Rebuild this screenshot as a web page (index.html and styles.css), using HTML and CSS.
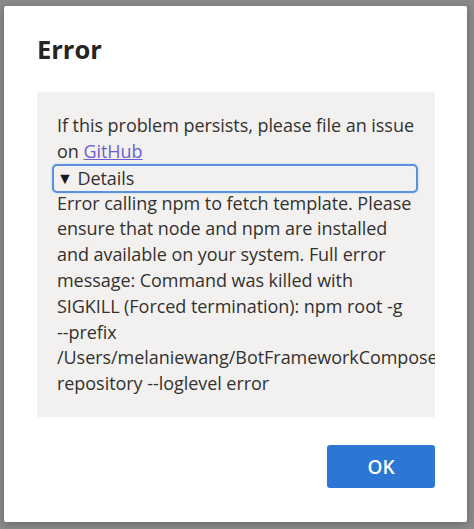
FILE: index.html
```html
<!DOCTYPE html>
<html lang="en">
<head>
<meta charset="utf-8">
<title>Error</title>
<link rel="stylesheet" href="styles.css">
</head>
<body>
<div class="overlay">
  <div class="dialog" role="dialog" aria-labelledby="dlg-title">
    <h1 class="title" id="dlg-title">Error</h1>
    <div class="message">
      <p class="lead">If this problem persists, please file an issue on <a href="#" class="link">GitHub</a></p>
      <details class="details" open>
        <summary class="summary"><span class="caret">&#9660;</span> Details</summary>
        <p class="detail-text">Error calling npm to fetch template. Please ensure that node and npm are installed and available on your system. Full error message: Command was killed with SIGKILL (Forced termination): npm root -g <span class="nowrap">--prefix</span> /Users/melaniewang/BotFrameworkComposer/.npm-repository <span class="nowrap">--loglevel</span> error</p>
      </details>
    </div>
    <div class="actions">
      <button class="ok" type="button">OK</button>
    </div>
  </div>
</div>
</body>
</html>
```
FILE: styles.css
```css
html, body {
  margin: 0;
  padding: 0;
  height: 100%;
}
body {
  background: #8a8a8a;
  font-family: "Open Sans", "Noto Sans", "Liberation Sans", sans-serif;
  color: #323130;
  overflow: hidden;
}
.overlay {
  height: 100%;
  box-sizing: border-box;
  padding: 6px 7px 7px 4px;
  display: flex;
}
.dialog {
  flex: 1;
  min-width: 0;
  background: #ffffff;
  border-radius: 2px;
  box-shadow: 0 2px 8px rgba(0,0,0,0.25);
  padding: 0 32px 0 33px;
  display: flex;
  flex-direction: column;
}
.title {
  margin: 0;
  padding: 29px 0 0 0;
  height: 57px;
  box-sizing: border-box;
  font-size: 25.5px;
  font-weight: 700;
  line-height: 28px;
  color: #252423;
}
.message {
  margin-top: 29px;
  background: #f2f1f0;
  padding: 21px 17px 19px 20px;
  font-size: 18px;
  letter-spacing: -0.05px;
  line-height: 25.8px;
  overflow: hidden;
  height: 325px;
  box-sizing: border-box;
  min-width: 0;
}
.lead {
  margin: 0;
}
.link {
  color: #6a5fd0;
  text-decoration: underline;
}
.details {
  margin: 0;
}
.summary {
  list-style: none;
  display: block;
  margin: 1px 2px 0 -3px;
  padding: 0 3px;
  height: 25px;
  border-radius: 3px;
  outline: 2px solid #5b8fe0;
  outline-offset: 0;
  box-shadow: 0 0 2px 2px rgba(91,143,224,0.4);
}
.summary::-webkit-details-marker {
  display: none;
}
.caret {
  font-size: 16px;
  vertical-align: 1px;
  color: #1b1a19;
}
.detail-text {
  margin: 0;
}
.nowrap {
  white-space: nowrap;
}
.actions {
  display: flex;
  justify-content: flex-end;
  padding-top: 28px;
}
.ok {
  width: 108px;
  height: 43px;
  background: #2b77d3;
  color: #ffffff;
  border: none;
  border-radius: 3px;
  font-family: inherit;
  font-size: 19px;
  font-weight: 600;
  cursor: pointer;
}
```
